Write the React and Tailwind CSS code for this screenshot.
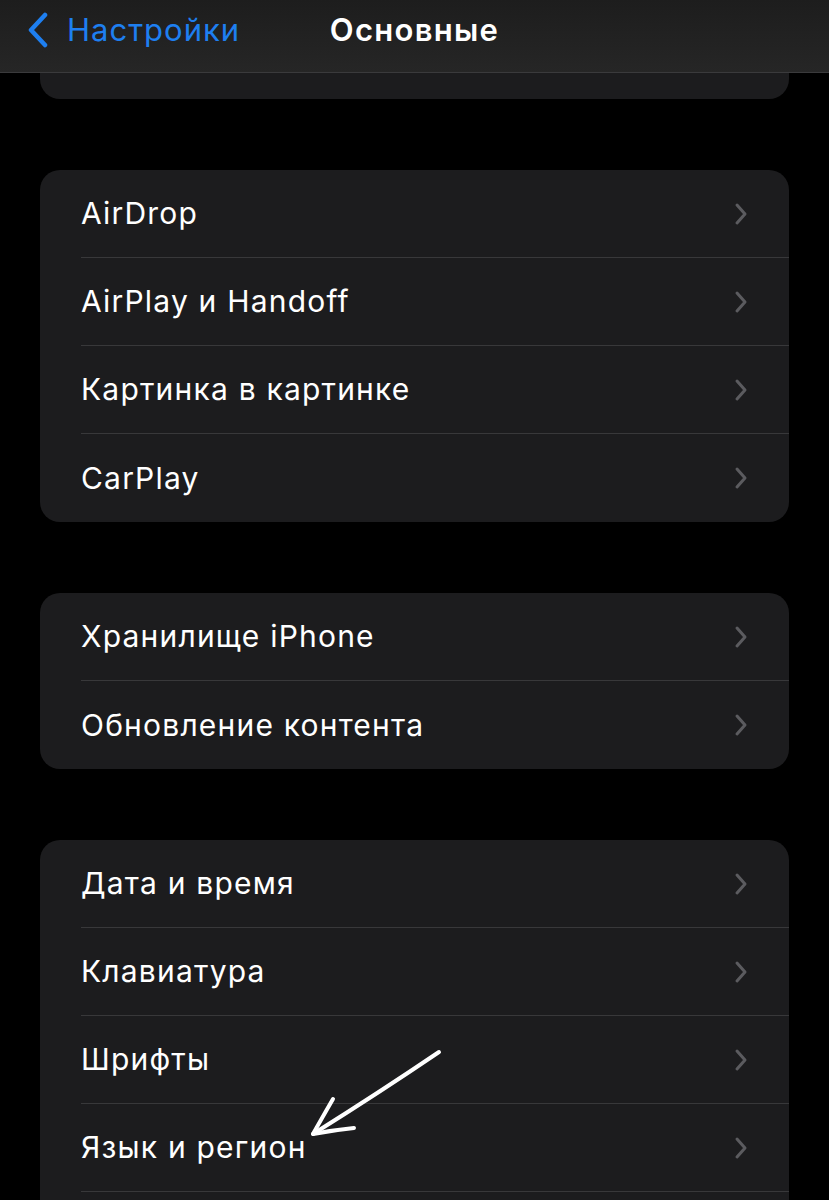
import React from 'react';

const groups = [
  ['AirDrop', 'AirPlay и Handoff', 'Картинка в картинке', 'CarPlay'],
  ['Хранилище iPhone', 'Обновление контента'],
  ['Дата и время', 'Клавиатура', 'Шрифты', 'Язык и регион'],
];

function Chevron() {
  return (
    <svg width="14" height="24" viewBox="0 0 14 24" className="shrink-0">
      <path d="M3 3 L11 12 L3 21" fill="none" stroke="#5b5b5f" strokeWidth="3" strokeLinecap="round" strokeLinejoin="round" />
    </svg>
  );
}

function Row({ label, last }) {
  return (
    <div className="flex h-[88px] items-stretch pl-[41px]">
      <div className={`flex flex-1 items-center justify-between pr-[41px] ${last ? '' : 'border-b border-[#38383a]'}`}>
        <span className="text-[30px] text-white tracking-[1.2px]">{label}</span>
        <Chevron />
      </div>
    </div>
  );
}

export default function App() {
  return (
    <div className="h-[1200px] overflow-hidden bg-black" style={{ fontFamily: 'Inter, "Noto Sans", sans-serif' }}>
      {/* Nav bar */}
      <div className="relative flex h-[73px] items-center border-b border-[#3a3a3c] bg-gradient-to-b from-[#1d1d1d] to-[#262626] pb-[12px]">
        <div className="flex items-center gap-[18px] pl-[27px]">
          <svg width="22" height="36" viewBox="0 0 22 36">
            <path d="M18 3 L4 18 L18 33" fill="none" stroke="#1e7ff0" strokeWidth="4.5" strokeLinecap="round" strokeLinejoin="round" />
          </svg>
          <span className="text-[31px] text-[#1e7ff0] tracking-[1px]">Настройки</span>
        </div>
        <div className="absolute inset-x-0 top-0 flex h-[60px] items-center justify-center pointer-events-none">
          <span className="text-[31px] font-semibold text-white tracking-[1.3px]">Основные</span>
        </div>
      </div>

      <div className="flex flex-col gap-[71px] px-[40px]">
        {/* card scrolled under the nav bar */}
        <div className="h-[26px] rounded-b-[20px] bg-[#1c1c1e]" />

        {groups.map((items, gi) => (
          <div key={gi} className="overflow-hidden rounded-[20px] bg-[#1c1c1e]">
            {items.map((label, i) => (
              <Row key={label} label={label} last={gi !== 2 && i === items.length - 1} />
            ))}
            {gi === 2 && <div className="h-[40px]" />}
          </div>
        ))}
      </div>

      {/* hand-drawn annotation arrow */}
      <svg className="absolute left-0 top-0 pointer-events-none" width="829" height="1200">
        <g fill="none" stroke="#ffffff" strokeWidth="4" strokeLinecap="round" strokeLinejoin="round">
          <path d="M439 1052 Q380 1092 313 1134" />
          <path d="M333 1099 Q322 1118 313 1134 Q334 1130 354 1128" />
        </g>
      </svg>
    </div>
  );
}
